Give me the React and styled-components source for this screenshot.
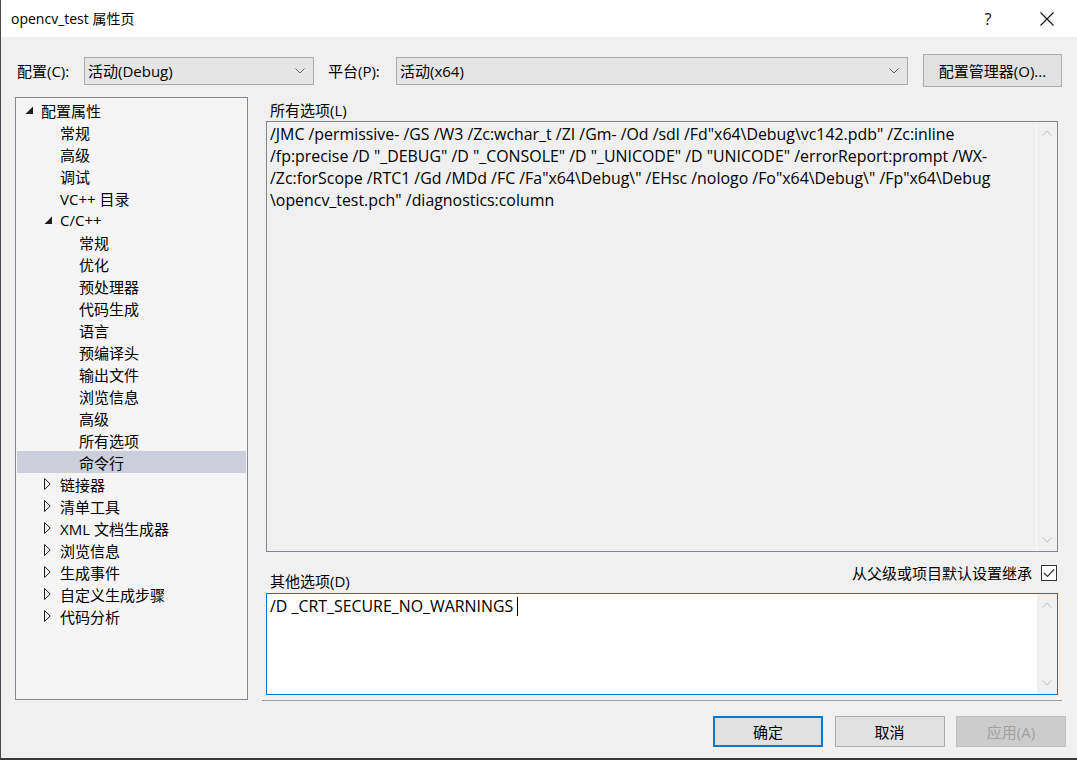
import React from "react";
import styled, { createGlobalStyle } from "styled-components";

const FONT = `"Open Sans", "Noto Sans CJK SC", sans-serif`;

const GlobalStyle = createGlobalStyle`
  html, body {
    margin: 0;
    padding: 0;
    background: #f0f0f0;
  }
  body {
    font-family: ${FONT};
    font-size: 15px;
    color: #000;
  }
`;

const treeItems = [
  { label: "配置属性", level: 0, arrow: "open" },
  { label: "常规", level: 1 },
  { label: "高级", level: 1 },
  { label: "调试", level: 1 },
  { label: "VC++ 目录", level: 1 },
  { label: "C/C++", level: 1, arrow: "open" },
  { label: "常规", level: 2 },
  { label: "优化", level: 2 },
  { label: "预处理器", level: 2 },
  { label: "代码生成", level: 2 },
  { label: "语言", level: 2 },
  { label: "预编译头", level: 2 },
  { label: "输出文件", level: 2 },
  { label: "浏览信息", level: 2 },
  { label: "高级", level: 2 },
  { label: "所有选项", level: 2 },
  { label: "命令行", level: 2, selected: true },
  { label: "链接器", level: 1, arrow: "closed" },
  { label: "清单工具", level: 1, arrow: "closed" },
  { label: "XML 文档生成器", level: 1, arrow: "closed" },
  { label: "浏览信息", level: 1, arrow: "closed" },
  { label: "生成事件", level: 1, arrow: "closed" },
  { label: "自定义生成步骤", level: 1, arrow: "closed" },
  { label: "代码分析", level: 1, arrow: "closed" },
];

// wrapped the way the dialog wraps it
const allOptions = [
  '/JMC /permissive- /GS /W3 /Zc:wchar_t /ZI /Gm- /Od /sdl /Fd"x64\\Debug\\vc142.pdb" /Zc:inline',
  '/fp:precise /D "_DEBUG" /D "_CONSOLE" /D "_UNICODE" /D "UNICODE" /errorReport:prompt /WX-',
  '/Zc:forScope /RTC1 /Gd /MDd /FC /Fa"x64\\Debug\\" /EHsc /nologo /Fo"x64\\Debug\\" /Fp"x64\\Debug',
  '\\opencv_test.pch" /diagnostics:column',
];

const Window = styled.div`
  width: 1077px;
  height: 760px;
  display: flex;
  flex-direction: column;
  box-sizing: border-box;
  border-left: 1px solid #4a4a4a;
  border-bottom: 2px solid #3a3a3a;
  overflow: hidden;
`;

const TitleBar = styled.div`
  height: 37px;
  flex: none;
  background: #fff;
  display: flex;
  align-items: center;
  padding-left: 10px;
`;

const Title = styled.div`
  flex: 1;
  font-size: 14px;
  padding-bottom: 1px;
`;

const TitleButton = styled.div`
  width: ${({ $w }) => $w}px;
  height: 37px;
  display: flex;
  align-items: center;
  justify-content: center;
  font-size: 16px;
  color: #111;
`;

const Body = styled.div`
  flex: 1;
  display: flex;
  flex-direction: column;
  padding: 16px 11px 11px 14px;
  min-height: 0;
`;

const ConfigRow = styled.div`
  flex: none;
  display: flex;
  align-items: center;
  height: 33px;
  margin-top: 1px;
`;

const FieldLabel = styled.div`
  width: ${({ $w }) => $w}px;
  padding-left: ${({ $pl }) => $pl || 0}px;
  box-sizing: border-box;
  white-space: nowrap;
`;

const Select = styled.div`
  width: ${({ $w }) => $w}px;
  height: 28px;
  box-sizing: border-box;
  border: 1px solid #acacac;
  background: #e5e5e5;
  display: flex;
  align-items: center;
  padding: 0 8px 0 3px;
  margin-right: ${({ $mr }) => $mr}px;
`;

const SelectText = styled.div`
  flex: 1;
`;

const Button = styled.div`
  width: ${({ $w }) => $w || 110}px;
  height: ${({ $h }) => $h || 31}px;
  box-sizing: border-box;
  border: ${({ $primary }) => ($primary ? "2px solid #0078d7" : "1px solid #adadad")};
  background: ${({ $disabled }) => ($disabled ? "#cccccc" : "#e1e1e1")};
  color: ${({ $disabled }) => ($disabled ? "#a0a0a0" : "#000")};
  display: flex;
  align-items: center;
  justify-content: center;
  white-space: nowrap;
  ${({ $disabled }) => $disabled && "border-color: #bfbfbf;"}
`;

const Main = styled.div`
  flex: none;
  height: 603px;
  display: flex;
  margin-top: 10px;
`;

const Tree = styled.div`
  width: 233px;
  flex: none;
  box-sizing: border-box;
  border: 1px solid #828790;
  background: #f5f5f5;
  padding: 1px;
`;

const TreeRow = styled.div`
  height: 22px;
  display: flex;
  align-items: center;
  padding-left: ${({ $level }) => 8 + $level * 19}px;
  background: ${({ $selected }) => ($selected ? "#cccedb" : "transparent")};
  white-space: nowrap;
`;

const ArrowBox = styled.div`
  width: 16px;
  height: 22px;
  display: flex;
  align-items: center;
  flex: none;
`;

const RightPane = styled.div`
  flex: 1;
  display: flex;
  flex-direction: column;
  padding: 0 8px 0 18px;
  & > * {
    flex: none;
  }
`;

const PaneLabel = styled.div`
  height: 24px;
  display: flex;
  align-items: center;
  padding-left: 4px;
`;

const TextBox = styled.div`
  height: ${({ $h }) => $h}px;
  box-sizing: border-box;
  border: 1px solid ${({ $focused }) => ($focused ? "#0078d7" : "#828790")};
  background: ${({ $focused }) => ($focused ? "#fff" : "#f0f0f0")};
  display: flex;
`;

const TextContent = styled.div`
  flex: 1;
  padding: 1px 3px;
  font-size: 15.9px;
  line-height: 22px;
  white-space: nowrap;
  overflow: hidden;
`;

const Caret = styled.span`
  display: inline-block;
  width: 1px;
  height: 19px;
  background: #000;
  margin-left: 4px;
  vertical-align: -4px;
`;

const ScrollBar = styled.div`
  width: 20px;
  flex: none;
  display: flex;
  flex-direction: column;
  justify-content: space-between;
  background: #f0f0f0;
  border-left: ${({ $line }) => ($line ? "1px solid #f9f9f9" : "none")};
`;

const ScrollArrow = styled.div`
  height: 22px;
  display: flex;
  align-items: center;
  justify-content: center;
`;

const InheritRow = styled.div`
  margin-top: 4px;
  height: 37px;
  display: flex;
  align-items: flex-end;
  justify-content: space-between;
  padding: 0 1px 2px 4px;
  box-sizing: border-box;
`;

const InheritLabel = styled.div`
  align-self: flex-start;
  display: flex;
  align-items: center;
  gap: 9px;
  margin-top: 6px;
`;

const CheckBox = styled.div`
  width: 16px;
  height: 16px;
  box-sizing: border-box;
  border: 1px solid #333;
  background: #fff;
  display: flex;
  align-items: center;
  justify-content: center;
`;

const Separator = styled.div`
  height: 1px;
  background: #a0a0a0;
  margin: 5px -4px 0 -4px;
`;

const Footer = styled.div`
  flex: none;
  display: flex;
  justify-content: flex-end;
  gap: 11.5px;
  margin-top: 16px;
`;

const Chevron = ({ up, color = "#606060", w = 10 }) => (
  <svg width={w} height={w / 2 + 1} viewBox="0 0 10 6">
    <polyline
      points={up ? "0.5,5.5 5,1 9.5,5.5" : "0.5,0.5 5,5 9.5,0.5"}
      fill="none"
      stroke={color}
      strokeWidth="1"
    />
  </svg>
);

const TreeArrow = ({ kind }) =>
  kind === "open" ? (
    <svg width="9" height="9" viewBox="0 0 9 9">
      <polygon points="8,0.5 8,8 0.5,8" fill="#1e1e1e" />
    </svg>
  ) : (
    <svg width="7" height="12" viewBox="0 0 7 12">
      <polygon points="0.5,0.5 6.2,6 0.5,11.5" fill="none" stroke="#1e1e1e" strokeWidth="1" />
    </svg>
  );

const App = () => (
  <>
    <GlobalStyle />
    <Window>
      <TitleBar>
        <Title>opencv_test 属性页</Title>
        <TitleButton $w={58}>?</TitleButton>
        <TitleButton $w={60}>
          <svg width="14" height="14" viewBox="0 0 14 14">
            <path d="M0.5 0.5 L13.5 13.5 M13.5 0.5 L0.5 13.5" stroke="#111" strokeWidth="1.1" />
          </svg>
        </TitleButton>
      </TitleBar>
      <Body>
        <ConfigRow>
          <FieldLabel $w={69} $pl={2}>配置(C):</FieldLabel>
          <Select $w={230} $mr={14}>
            <SelectText>活动(Debug)</SelectText>
            <Chevron />
          </Select>
          <FieldLabel $w={68}>平台(P):</FieldLabel>
          <Select $w={512} $mr={15}>
            <SelectText>活动(x64)</SelectText>
            <Chevron />
          </Select>
          <Button $w={139} $h={33}>配置管理器(O)...</Button>
        </ConfigRow>
        <Main>
          <Tree>
            {treeItems.map((item, i) => (
              <TreeRow key={i} $level={item.level} $selected={item.selected}>
                <ArrowBox>{item.arrow && <TreeArrow kind={item.arrow} />}</ArrowBox>
                {item.label}
              </TreeRow>
            ))}
          </Tree>
          <RightPane>
            <PaneLabel>所有选项(L)</PaneLabel>
            <TextBox $h={431}>
              <TextContent>
                {allOptions.map((line, i) => (
                  <div key={i}>{line}</div>
                ))}
              </TextContent>
              <ScrollBar $line>
                <ScrollArrow><Chevron up color="#c2c2c2" /></ScrollArrow>
                <ScrollArrow><Chevron color="#c2c2c2" /></ScrollArrow>
              </ScrollBar>
            </TextBox>
            <InheritRow>
              <span>其他选项(D)</span>
              <InheritLabel>
                从父级或项目默认设置继承
                <CheckBox>
                  <svg width="12" height="10" viewBox="0 0 12 10">
                    <polyline points="1,5 4.5,8.5 11,1.5" fill="none" stroke="#333" strokeWidth="1.2" />
                  </svg>
                </CheckBox>
              </InheritLabel>
            </InheritRow>
            <TextBox $h={102} $focused>
              <TextContent>
                /D _CRT_SECURE_NO_WARNINGS
                <Caret />
              </TextContent>
              <ScrollBar>
                <ScrollArrow><Chevron up color="#c2c2c2" /></ScrollArrow>
                <ScrollArrow><Chevron color="#c2c2c2" /></ScrollArrow>
              </ScrollBar>
            </TextBox>
            <Separator />
          </RightPane>
        </Main>
        <Footer>
          <Button $primary>确定</Button>
          <Button>取消</Button>
          <Button $disabled>应用(A)</Button>
        </Footer>
      </Body>
    </Window>
  </>
);

export default App;
